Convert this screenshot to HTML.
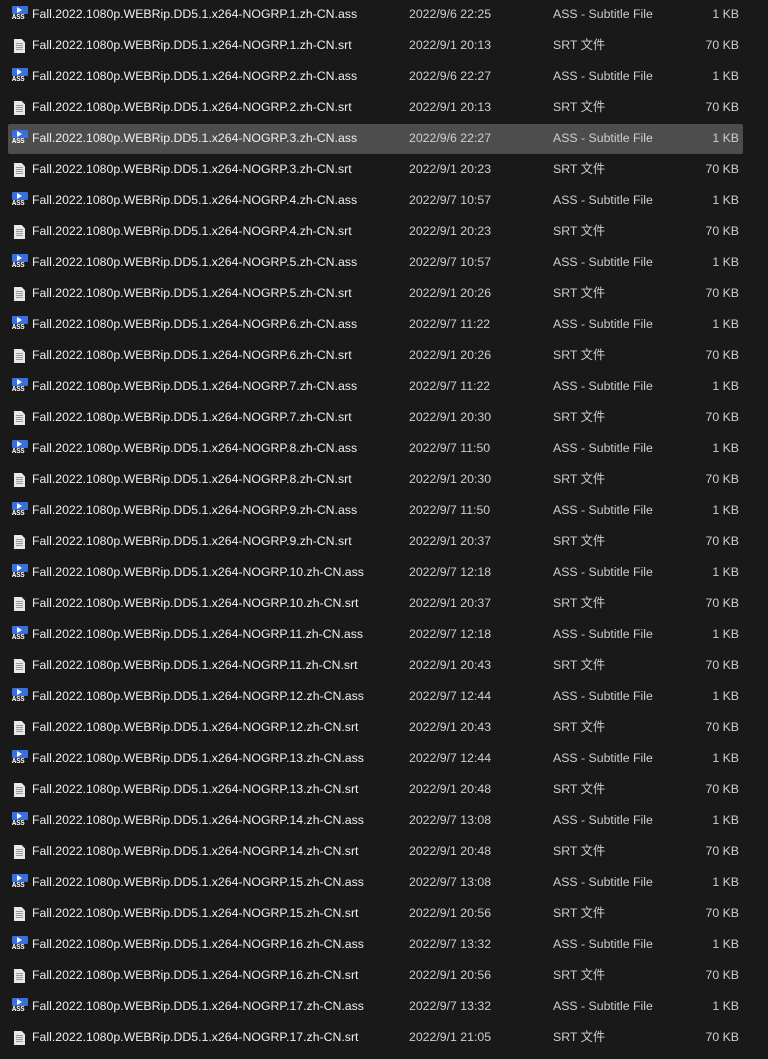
<!DOCTYPE html>
<html><head><meta charset="utf-8"><style>
body{margin:0;background:#191919;width:768px;height:1059px;overflow:hidden;font-family:"Segoe UI","Liberation Sans","Noto Sans CJK SC",sans-serif;font-size:12.3px;color:#e6e6e6}
.r{position:relative;margin-left:8px;width:735px;height:30px;margin-bottom:1px}
.r.sel{background:#4d4d4d;border-radius:2px}
.r span{position:absolute;top:6px;white-space:nowrap;line-height:16px}
.n{left:24px;color:#f0f0f0}
.d{left:401px;color:#cfcfcf}
.t{left:545px;color:#cfcfcf}
.s{right:4px;color:#cfcfcf}
.ia{position:absolute;left:4px;top:6px;width:16px;height:16px}
.ia b{position:absolute;left:0;top:0;width:16px;height:8px;background:#3a6fe0;border-radius:1px}
.ia b:after{content:"";position:absolute;left:5px;top:1px;border-left:5px solid #fff;border-top:3px solid transparent;border-bottom:3px solid transparent}
.ia i{position:absolute;left:0;top:8px;font:bold 7px/8px "Liberation Mono",monospace;color:#fff;font-style:normal;letter-spacing:0}
.id{position:absolute;left:6px;top:8px;width:11px;height:14px;background:#e8e8e8;clip-path:polygon(0 0,70% 0,100% 25%,100% 100%,0 100%)}
.id:after{content:"";position:absolute;left:2px;top:4px;width:7px;height:7px;background:repeating-linear-gradient(#999 0 1px,transparent 1px 2px)}
</style></head><body>
<div class="r"><div class="ia"><b></b><i>ASS</i></div><span class="n">Fall.2022.1080p.WEBRip.DD5.1.x264-NOGRP.1.zh-CN.ass</span><span class="d">2022/9/6 22:25</span><span class="t">ASS - Subtitle File</span><span class="s">1 KB</span></div>
<div class="r"><div class="id"></div><span class="n">Fall.2022.1080p.WEBRip.DD5.1.x264-NOGRP.1.zh-CN.srt</span><span class="d">2022/9/1 20:13</span><span class="t">SRT 文件</span><span class="s">70 KB</span></div>
<div class="r"><div class="ia"><b></b><i>ASS</i></div><span class="n">Fall.2022.1080p.WEBRip.DD5.1.x264-NOGRP.2.zh-CN.ass</span><span class="d">2022/9/6 22:27</span><span class="t">ASS - Subtitle File</span><span class="s">1 KB</span></div>
<div class="r"><div class="id"></div><span class="n">Fall.2022.1080p.WEBRip.DD5.1.x264-NOGRP.2.zh-CN.srt</span><span class="d">2022/9/1 20:13</span><span class="t">SRT 文件</span><span class="s">70 KB</span></div>
<div class="r sel"><div class="ia"><b></b><i>ASS</i></div><span class="n">Fall.2022.1080p.WEBRip.DD5.1.x264-NOGRP.3.zh-CN.ass</span><span class="d">2022/9/6 22:27</span><span class="t">ASS - Subtitle File</span><span class="s">1 KB</span></div>
<div class="r"><div class="id"></div><span class="n">Fall.2022.1080p.WEBRip.DD5.1.x264-NOGRP.3.zh-CN.srt</span><span class="d">2022/9/1 20:23</span><span class="t">SRT 文件</span><span class="s">70 KB</span></div>
<div class="r"><div class="ia"><b></b><i>ASS</i></div><span class="n">Fall.2022.1080p.WEBRip.DD5.1.x264-NOGRP.4.zh-CN.ass</span><span class="d">2022/9/7 10:57</span><span class="t">ASS - Subtitle File</span><span class="s">1 KB</span></div>
<div class="r"><div class="id"></div><span class="n">Fall.2022.1080p.WEBRip.DD5.1.x264-NOGRP.4.zh-CN.srt</span><span class="d">2022/9/1 20:23</span><span class="t">SRT 文件</span><span class="s">70 KB</span></div>
<div class="r"><div class="ia"><b></b><i>ASS</i></div><span class="n">Fall.2022.1080p.WEBRip.DD5.1.x264-NOGRP.5.zh-CN.ass</span><span class="d">2022/9/7 10:57</span><span class="t">ASS - Subtitle File</span><span class="s">1 KB</span></div>
<div class="r"><div class="id"></div><span class="n">Fall.2022.1080p.WEBRip.DD5.1.x264-NOGRP.5.zh-CN.srt</span><span class="d">2022/9/1 20:26</span><span class="t">SRT 文件</span><span class="s">70 KB</span></div>
<div class="r"><div class="ia"><b></b><i>ASS</i></div><span class="n">Fall.2022.1080p.WEBRip.DD5.1.x264-NOGRP.6.zh-CN.ass</span><span class="d">2022/9/7 11:22</span><span class="t">ASS - Subtitle File</span><span class="s">1 KB</span></div>
<div class="r"><div class="id"></div><span class="n">Fall.2022.1080p.WEBRip.DD5.1.x264-NOGRP.6.zh-CN.srt</span><span class="d">2022/9/1 20:26</span><span class="t">SRT 文件</span><span class="s">70 KB</span></div>
<div class="r"><div class="ia"><b></b><i>ASS</i></div><span class="n">Fall.2022.1080p.WEBRip.DD5.1.x264-NOGRP.7.zh-CN.ass</span><span class="d">2022/9/7 11:22</span><span class="t">ASS - Subtitle File</span><span class="s">1 KB</span></div>
<div class="r"><div class="id"></div><span class="n">Fall.2022.1080p.WEBRip.DD5.1.x264-NOGRP.7.zh-CN.srt</span><span class="d">2022/9/1 20:30</span><span class="t">SRT 文件</span><span class="s">70 KB</span></div>
<div class="r"><div class="ia"><b></b><i>ASS</i></div><span class="n">Fall.2022.1080p.WEBRip.DD5.1.x264-NOGRP.8.zh-CN.ass</span><span class="d">2022/9/7 11:50</span><span class="t">ASS - Subtitle File</span><span class="s">1 KB</span></div>
<div class="r"><div class="id"></div><span class="n">Fall.2022.1080p.WEBRip.DD5.1.x264-NOGRP.8.zh-CN.srt</span><span class="d">2022/9/1 20:30</span><span class="t">SRT 文件</span><span class="s">70 KB</span></div>
<div class="r"><div class="ia"><b></b><i>ASS</i></div><span class="n">Fall.2022.1080p.WEBRip.DD5.1.x264-NOGRP.9.zh-CN.ass</span><span class="d">2022/9/7 11:50</span><span class="t">ASS - Subtitle File</span><span class="s">1 KB</span></div>
<div class="r"><div class="id"></div><span class="n">Fall.2022.1080p.WEBRip.DD5.1.x264-NOGRP.9.zh-CN.srt</span><span class="d">2022/9/1 20:37</span><span class="t">SRT 文件</span><span class="s">70 KB</span></div>
<div class="r"><div class="ia"><b></b><i>ASS</i></div><span class="n">Fall.2022.1080p.WEBRip.DD5.1.x264-NOGRP.10.zh-CN.ass</span><span class="d">2022/9/7 12:18</span><span class="t">ASS - Subtitle File</span><span class="s">1 KB</span></div>
<div class="r"><div class="id"></div><span class="n">Fall.2022.1080p.WEBRip.DD5.1.x264-NOGRP.10.zh-CN.srt</span><span class="d">2022/9/1 20:37</span><span class="t">SRT 文件</span><span class="s">70 KB</span></div>
<div class="r"><div class="ia"><b></b><i>ASS</i></div><span class="n">Fall.2022.1080p.WEBRip.DD5.1.x264-NOGRP.11.zh-CN.ass</span><span class="d">2022/9/7 12:18</span><span class="t">ASS - Subtitle File</span><span class="s">1 KB</span></div>
<div class="r"><div class="id"></div><span class="n">Fall.2022.1080p.WEBRip.DD5.1.x264-NOGRP.11.zh-CN.srt</span><span class="d">2022/9/1 20:43</span><span class="t">SRT 文件</span><span class="s">70 KB</span></div>
<div class="r"><div class="ia"><b></b><i>ASS</i></div><span class="n">Fall.2022.1080p.WEBRip.DD5.1.x264-NOGRP.12.zh-CN.ass</span><span class="d">2022/9/7 12:44</span><span class="t">ASS - Subtitle File</span><span class="s">1 KB</span></div>
<div class="r"><div class="id"></div><span class="n">Fall.2022.1080p.WEBRip.DD5.1.x264-NOGRP.12.zh-CN.srt</span><span class="d">2022/9/1 20:43</span><span class="t">SRT 文件</span><span class="s">70 KB</span></div>
<div class="r"><div class="ia"><b></b><i>ASS</i></div><span class="n">Fall.2022.1080p.WEBRip.DD5.1.x264-NOGRP.13.zh-CN.ass</span><span class="d">2022/9/7 12:44</span><span class="t">ASS - Subtitle File</span><span class="s">1 KB</span></div>
<div class="r"><div class="id"></div><span class="n">Fall.2022.1080p.WEBRip.DD5.1.x264-NOGRP.13.zh-CN.srt</span><span class="d">2022/9/1 20:48</span><span class="t">SRT 文件</span><span class="s">70 KB</span></div>
<div class="r"><div class="ia"><b></b><i>ASS</i></div><span class="n">Fall.2022.1080p.WEBRip.DD5.1.x264-NOGRP.14.zh-CN.ass</span><span class="d">2022/9/7 13:08</span><span class="t">ASS - Subtitle File</span><span class="s">1 KB</span></div>
<div class="r"><div class="id"></div><span class="n">Fall.2022.1080p.WEBRip.DD5.1.x264-NOGRP.14.zh-CN.srt</span><span class="d">2022/9/1 20:48</span><span class="t">SRT 文件</span><span class="s">70 KB</span></div>
<div class="r"><div class="ia"><b></b><i>ASS</i></div><span class="n">Fall.2022.1080p.WEBRip.DD5.1.x264-NOGRP.15.zh-CN.ass</span><span class="d">2022/9/7 13:08</span><span class="t">ASS - Subtitle File</span><span class="s">1 KB</span></div>
<div class="r"><div class="id"></div><span class="n">Fall.2022.1080p.WEBRip.DD5.1.x264-NOGRP.15.zh-CN.srt</span><span class="d">2022/9/1 20:56</span><span class="t">SRT 文件</span><span class="s">70 KB</span></div>
<div class="r"><div class="ia"><b></b><i>ASS</i></div><span class="n">Fall.2022.1080p.WEBRip.DD5.1.x264-NOGRP.16.zh-CN.ass</span><span class="d">2022/9/7 13:32</span><span class="t">ASS - Subtitle File</span><span class="s">1 KB</span></div>
<div class="r"><div class="id"></div><span class="n">Fall.2022.1080p.WEBRip.DD5.1.x264-NOGRP.16.zh-CN.srt</span><span class="d">2022/9/1 20:56</span><span class="t">SRT 文件</span><span class="s">70 KB</span></div>
<div class="r"><div class="ia"><b></b><i>ASS</i></div><span class="n">Fall.2022.1080p.WEBRip.DD5.1.x264-NOGRP.17.zh-CN.ass</span><span class="d">2022/9/7 13:32</span><span class="t">ASS - Subtitle File</span><span class="s">1 KB</span></div>
<div class="r"><div class="id"></div><span class="n">Fall.2022.1080p.WEBRip.DD5.1.x264-NOGRP.17.zh-CN.srt</span><span class="d">2022/9/1 21:05</span><span class="t">SRT 文件</span><span class="s">70 KB</span></div>
</body></html>
